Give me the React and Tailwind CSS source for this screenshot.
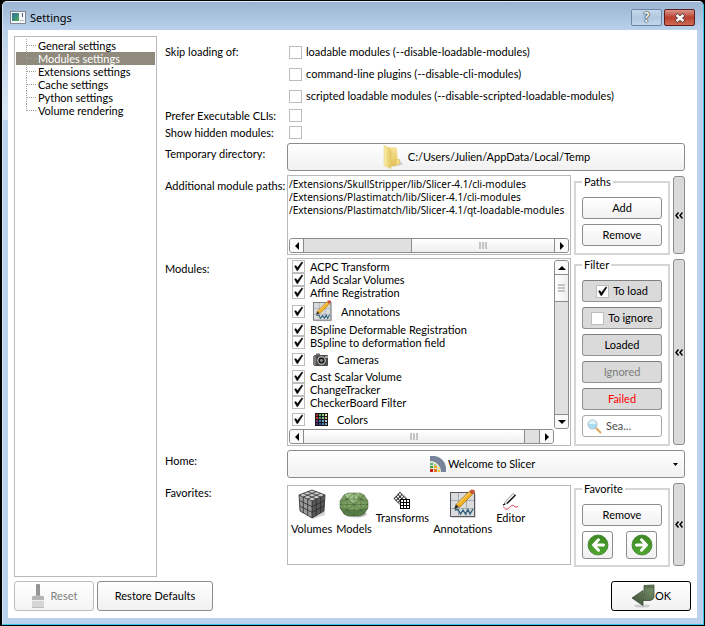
import { useState } from "react";

const BOX = "border border-[#b9b9b9] bg-white";
const BUTTON =
  "flex items-center justify-center rounded-[3px] border border-[#8c8c8c] bg-linear-to-b from-white to-[#f1f1f1]";
const TOGGLE =
  "flex h-[22px] w-full items-center justify-center rounded-[3px] border border-[#929292] border-t-[#7f7f7f] bg-[#dadada]";

const PAGES = [
  "General settings",
  "Modules settings",
  "Extensions settings",
  "Cache settings",
  "Python settings",
  "Volume rendering",
];

const SKIPS = [
  "loadable modules (--disable-loadable-modules)",
  "command-line plugins (--disable-cli-modules)",
  "scripted loadable modules (--disable-scripted-loadable-modules)",
];

const PATHS = [
  "/Extensions/SkullStripper/lib/Slicer-4.1/cli-modules",
  "/Extensions/Plastimatch/lib/Slicer-4.1/cli-modules",
  "/Extensions/Plastimatch/lib/Slicer-4.1/qt-loadable-modules",
];

const MODULES = [
  { name: "ACPC Transform" },
  { name: "Add Scalar Volumes" },
  { name: "Affine Registration" },
  { name: "Annotations", icon: "annotations" },
  { name: "BSpline Deformable Registration" },
  { name: "BSpline to deformation field" },
  { name: "Cameras", icon: "camera" },
  { name: "Cast Scalar Volume" },
  { name: "ChangeTracker" },
  { name: "CheckerBoard Filter" },
  { name: "Colors", icon: "colors" },
];

function CheckBox({ id, defaultChecked = false, label }) {
  return (
    <span className="relative block size-[13px] shrink-0">
      <input
        id={id}
        type="checkbox"
        aria-label={label}
        defaultChecked={defaultChecked}
        className="peer block size-[13px] appearance-none border border-[#bdbdbd] bg-white"
      />
      <svg
        viewBox="0 0 13 13"
        className="pointer-events-none absolute inset-0 hidden size-[13px] peer-checked:block"
      >
        <path d="M2.6 6.2 L4 5.6 L5.3 7.8 L10 1.8 L10.8 2.6 L5.7 10.6 L4.9 10.6 Z" fill="#000" stroke="#000" strokeWidth="0.5" />
      </svg>
    </span>
  );
}

function AppIcon() {
  return (
    <svg viewBox="0 0 16 13" className="h-[13px] w-4 shrink-0">
      <defs>
        <linearGradient id="appGreen" x1="0" y1="0" x2="1" y2="1">
          <stop offset="0" stopColor="#2e6aa0" />
          <stop offset="1" stopColor="#4cae5c" />
        </linearGradient>
      </defs>
      <rect x="0.5" y="0.5" width="15" height="12" fill="#f7f7f7" stroke="#7d8894" />
      <rect x="2" y="2" width="7" height="8" fill="url(#appGreen)" />
      <rect x="12" y="2" width="1" height="4" fill="#3d5f8a" />
      <rect x="10" y="9" width="4" height="1" fill="#b9bcc0" />
    </svg>
  );
}

function FolderIcon() {
  return (
    <svg viewBox="0 0 22 24" className="h-6 w-[22px] shrink-0">
      <defs>
        <linearGradient id="folderFront" x1="0" y1="0" x2="1" y2="0">
          <stop offset="0" stopColor="#fbeeb0" />
          <stop offset="1" stopColor="#e6c65c" />
        </linearGradient>
        <linearGradient id="folderBack" x1="0" y1="0" x2="0" y2="1">
          <stop offset="0" stopColor="#f6e39a" />
          <stop offset="1" stopColor="#e3bf52" />
        </linearGradient>
      </defs>
      <path d="M10 22 L21 19.5 L17 14 Z" fill="#a8a8a8" opacity="0.5" />
      <path d="M5 2 L14 2.5 L15 4 L15.5 15 L15.5 20 L7 22 Z" fill="url(#folderBack)" />
      <path d="M2 0.5 L7 3 L9 6 L9 23.5 L2 20.5 Z" fill="url(#folderFront)" stroke="#e3c868" strokeWidth="0.5" />
      <path d="M14 14.5 H17.5 V19 L14 20 Z" fill="#f2dc84" stroke="#dfbe5a" strokeWidth="0.5" />
    </svg>
  );
}

function AnnotationsIcon({ className }) {
  return (
    <svg viewBox="0 0 28 30" className={className}>
      <rect x="3" y="5" width="24" height="24" fill="#8e9096" opacity="0.35" />
      <rect x="1.5" y="3.5" width="24" height="24" fill="#d9dbdc" stroke="#55585c" strokeWidth="1" />
      <path d="M9.5 4 V27 M17.5 4 V27 M2 11.5 H25 M2 19.5 H25" stroke="#a9acaf" strokeWidth="1" />
      <path d="M6 21 L9 20.5 L11.5 25 L14 21 L16.5 25 L19 20.5 L21 25 L24 20" fill="none" stroke="#2f607d" strokeWidth="1.4" />
      <path d="M5 20.5 L7 15 L10.5 17.5 Z" fill="#2a2a2a" />
      <path d="M7 15.5 L20 2.5 L23.5 5.5 L10.5 18.5 Z" fill="#efaf20" stroke="#9a6a10" strokeWidth="0.6" />
      <path d="M8.5 15.5 L21 3.5" stroke="#ffe08a" strokeWidth="1" />
      <path d="M20 2.5 L22.5 0.5 L25.5 1 L25.8 3.5 L23.5 5.5 Z" fill="#c8553b" />
    </svg>
  );
}

function CameraIcon() {
  return (
    <svg viewBox="0 0 16 14" className="h-[14px] w-4 shrink-0">
      <rect x="1" y="2" width="14" height="11" rx="1" fill="#4a4c4c" />
      <rect x="3" y="0.5" width="4" height="2" fill="#6c6e6e" />
      <rect x="0" y="3" width="3" height="9" fill="#7a7c7c" />
      <rect x="12" y="3" width="3" height="2" fill="#a7a9a9" />
      <circle cx="8.5" cy="7.5" r="4.2" fill="#d4d6d6" />
      <circle cx="8.5" cy="7.5" r="3.2" fill="#1c1c1c" />
      <circle cx="8.5" cy="7.5" r="1.4" fill="#8f9494" />
    </svg>
  );
}

const SWATCHES = [
  ["#b02a3a", "#5fae62", "#8fd07a", "#e8e6b0"],
  ["#d8342c", "#4f9a86", "#7fc4b0", "#d8b070"],
  ["#7a2c8c", "#3f6fa8", "#6fa4cc", "#b8c8d8"],
  ["#4a2a6c", "#2c4c9c", "#4c84c4", "#8098c0"],
];

function ColorsIcon() {
  return (
    <svg viewBox="0 0 13 13" className="size-[13px] shrink-0">
      <rect width="13" height="13" fill="#1b1b1b" />
      {SWATCHES.flatMap((row, y) =>
        row.map((fill, x) => (
          <rect key={`${x}${y}`} x={1 + x * 3} y={1 + y * 3} width="2" height="2" fill={fill} />
        ))
      )}
    </svg>
  );
}

function SlicerIcon() {
  return (
    <svg viewBox="0 0 16 16" className="size-4 shrink-0">
      <path d="M0 5 A11 11 0 0 1 11 16 H0 Z" fill="#e3e6cf" />
      <path d="M0 0 H5 A13 13 0 0 1 16 11 V16 H11 A11 11 0 0 0 0 5 Z" fill="#76839b" />
      <rect x="0" y="7" width="3" height="2" fill="#5fae8c" />
      <rect x="4" y="8" width="2" height="2" fill="#a9d07c" />
      <rect x="0" y="10" width="3" height="2" fill="#3f9c3c" />
      <rect x="4" y="10" width="3" height="2" fill="#f0a030" />
      <rect x="8" y="11" width="2" height="2" fill="#f0e080" />
      <rect x="0" y="13" width="3" height="3" fill="#c81e18" />
      <rect x="4" y="13" width="3" height="3" fill="#e87020" />
      <rect x="8" y="14" width="2" height="2" fill="#f0c040" />
    </svg>
  );
}

function VolumesIcon() {
  return (
    <svg viewBox="0 0 28 30" className="h-[30px] w-7">
      <path d="M14 29 L27 22 V26 L15 30 Z" fill="#aaa" opacity="0.5" />
      <path d="M14 1 L27 6 L14 12 L1 6 Z" fill="#c9c9c9" />
      <path d="M1 6 L14 12 V29 L2 22 Z" fill="#9a9a9a" />
      <path d="M27 6 L14 12 V29 L26 22 Z" fill="#585858" />
      <path
        d="M14 1 L27 6 L14 12 L1 6 Z M1 6 L2 22 L14 29 L26 22 L27 6 M14 12 V29 M9.7 2.7 L22.7 8 M5.3 4.3 L18.3 10 M18.3 2.7 L5.3 8 M22.7 4.3 L9.7 10 M1.3 11.5 L14 17.7 L26.7 11.5 M1.7 17 L14 23.3 L26.3 17 M5.3 8 V24 M9.7 10 V26.5 M18.3 10 V26.5 M22.7 8 V24"
        fill="none"
        stroke="#2b2b2b"
        strokeWidth="0.8"
      />
    </svg>
  );
}

function ModelsIcon() {
  return (
    <svg viewBox="0 0 30 26" className="h-[26px] w-[30px]">
      <ellipse cx="17" cy="22" rx="11" ry="3.5" fill="#888" opacity="0.5" />
      <path d="M9 1 H21 L25 3 L29 9 V16 L25 22 L21 24 H9 L5 22 L1 16 V9 L5 3 Z" fill="#7da163" />
      <path d="M5 3 L9 1 H21 L15 12 L5 3 Z" fill="#a3c38a" />
      <path d="M1 16 L5 22 L9 24 H21 L25 22 L29 16 L22 18 H8 Z" fill="#5a7f48" />
      <path
        d="M9 1 H21 L25 3 L29 9 V16 L25 22 L21 24 H9 L5 22 L1 16 V9 L5 3 Z M5 3 L8 7 L1 9 M8 7 H22 L29 9 M25 3 L22 7 M8 7 V18 L1 16 M22 7 V18 L29 16 M8 18 H22 M8 18 L5 22 M22 18 L25 22 M8 7 L22 18 M22 7 L8 18 M15 1 V24 M1 12.5 H29 M8 7 L15 1 L22 7 M8 18 L15 24 L22 18 M1 12.5 L8 7 M1 12.5 L8 18 M29 12.5 L22 7 M29 12.5 L22 18"
        fill="none"
        stroke="#3c5a30"
        strokeWidth="0.5"
      />
    </svg>
  );
}

function TransformsIcon() {
  return (
    <svg viewBox="0 0 18 18" className="size-[18px]">
      <path
        d="M7 0.5 L14 7 M5 2.5 L11 8.5 M3 4.5 L9 10.5 M1 6.5 L8 13 M7 0.5 L1 6.5 M9 2.5 L3 8.5 M11 4.5 L5 10.5 M13 6.5 L7 12.5"
        fill="none"
        stroke="#111"
        strokeWidth="1.2"
        strokeDasharray="1 0.6"
      />
      <rect x="7" y="7" width="10" height="10" fill="#fff" />
      <path d="M7.5 7 V17 M10.5 7 V17 M13.5 7 V17 M16.5 7 V17 M7 7.5 H17 M7 10.5 H17 M7 13.5 H17 M7 16.5 H17" stroke="#000" strokeWidth="1" />
    </svg>
  );
}

function EditorIcon() {
  return (
    <svg viewBox="0 0 18 18" className="size-[18px]">
      <path d="M2 12.5 L3 10 L11 1.5 L13.5 3 L5 11.5 Z" fill="#f2f2f2" stroke="#777" strokeWidth="0.7" />
      <path d="M5 11.5 L13.5 3" stroke="#111" strokeWidth="1.3" />
      <path d="M1 13 L3 12" stroke="#000" strokeWidth="1.2" />
      <path d="M1.5 14.5 C3 18 5 17.5 7 16 C9 14 10 12.5 12 14 C13.5 15 14 15.5 16 14.5" fill="none" stroke="#d8344c" strokeWidth="1" />
    </svg>
  );
}

function ArrowBall({ flip }) {
  return (
    <svg viewBox="0 0 22 22" className="size-[22px]">
      <defs>
        <linearGradient id={flip ? "ballR" : "ballL"} x1="0" y1="0" x2="0" y2="1">
          <stop offset="0" stopColor="#3c8a24" />
          <stop offset="1" stopColor="#4fa62e" />
        </linearGradient>
      </defs>
      <circle cx="11" cy="11" r="10" fill={`url(#${flip ? "ballR" : "ballL"})`} stroke="#3c7c2c" strokeWidth="0.8" />
      <path
        d={
          flip
            ? "M5.5 11 H14 M10.5 5.8 L15.5 11 L10.5 16.2"
            : "M16.5 11 H8 M11.5 5.8 L6.5 11 L11.5 16.2"
        }
        fill="none"
        stroke="#fff"
        strokeWidth="3"
        strokeLinecap="round"
        strokeLinejoin="round"
      />
    </svg>
  );
}

function BrushIcon() {
  return (
    <svg viewBox="0 0 14 26" className="h-[26px] w-[14px] shrink-0">
      <rect x="5" y="1" width="4" height="12" rx="1" fill="#949494" />
      <path d="M1 14 Q1.5 12.5 5 12.5 H9 Q12.5 12.5 13 14 V17 H1 Z" fill="#b4b4b4" />
      <path d="M1 17 H13 V24 H1 Z" fill="#d6d6d6" />
      <path d="M1 17.5 H13" stroke="#eee" strokeWidth="1" />
      <path d="M1 24.5 H13" stroke="#bbb" strokeWidth="1" />
    </svg>
  );
}

function ReturnIcon() {
  return (
    <svg viewBox="0 0 24 24" className="size-6 shrink-0">
      <defs>
        <linearGradient id="returnFill" x1="1" y1="0" x2="0" y2="1">
          <stop offset="0" stopColor="#7d956e" />
          <stop offset="1" stopColor="#3a4d35" />
        </linearGradient>
      </defs>
      <ellipse cx="11" cy="22" rx="8" ry="1.6" fill="#bbb" opacity="0.7" />
      <path d="M13 1.5 L23 1 V13 Q22.5 16 19 16.5 H12 V21.5 L1 14 L12 6.5 V10.5 H13 Z" fill="url(#returnFill)" stroke="#3b4a36" strokeWidth="0.8" />
      <path d="M14 2 L22 1.6 V4 L14 4.5 Z" fill="#5d7050" />
    </svg>
  );
}

function SearchIcon() {
  return (
    <svg viewBox="0 0 15 15" className="size-[15px] shrink-0">
      <path d="M9 9 L13.5 13.5" stroke="#e0a85c" strokeWidth="2" strokeLinecap="round" />
      <circle cx="5.5" cy="5.5" r="4.6" fill="#a9dcf0" stroke="#b4c4cc" strokeWidth="1" />
      <path d="M2 5 A3.5 3.5 0 0 1 9 5 Z" fill="#dff4fb" />
    </svg>
  );
}

const TRIANGLES = {
  left: "M6 0 V8 L2 4 Z",
  right: "M2 0 V8 L6 4 Z",
  up: "M0 6 H8 L4 2 Z",
  down: "M0 2 H8 L4 6 Z",
};

function Arrow({ dir }) {
  return (
    <svg viewBox="0 0 8 8" className="size-2">
      <path d={TRIANGLES[dir]} fill="#000" />
    </svg>
  );
}

function HScroll({ before, thumb, after }) {
  return (
    <div className="flex h-[15px] overflow-hidden rounded-[3px] border border-[#8c8c8c] bg-[#e0e0e0]">
      <button aria-label="Scroll left" className="flex w-3.5 items-center justify-center border-r border-[#8c8c8c] bg-[#fafafa]">
        <Arrow dir="left" />
      </button>
      <div className={before} />
      <div className={`flex items-center justify-center gap-px bg-linear-to-b from-white to-[#efefef] ${thumb}`}>
        <i className="h-[7px] w-0.5 bg-[#c4c4c4]" />
        <i className="h-[7px] w-0.5 bg-[#c4c4c4]" />
        <i className="h-[7px] w-0.5 bg-[#c4c4c4]" />
      </div>
      <div className={after} />
      <button aria-label="Scroll right" className="flex w-3.5 items-center justify-center border-l border-[#8c8c8c] bg-[#fafafa]">
        <Arrow dir="right" />
      </button>
    </div>
  );
}

function VScroll() {
  return (
    <div className="flex w-[15px] flex-col overflow-hidden rounded-[3px] border border-[#8c8c8c] bg-[#e0e0e0]">
      <button aria-label="Scroll up" className="flex h-3.5 items-center justify-center border-b border-[#8c8c8c] bg-[#fafafa]">
        <Arrow dir="up" />
      </button>
      <div className="flex h-[27px] flex-col items-center justify-center gap-px border-b border-[#8c8c8c] bg-linear-to-r from-white to-[#efefef]">
        <i className="h-0.5 w-[7px] bg-[#c4c4c4]" />
        <i className="h-0.5 w-[7px] bg-[#c4c4c4]" />
        <i className="h-0.5 w-[7px] bg-[#c4c4c4]" />
      </div>
      <div className="flex-1" />
      <button aria-label="Scroll down" className="flex h-3.5 items-center justify-center border-t border-[#8c8c8c] bg-[#fafafa]">
        <Arrow dir="down" />
      </button>
    </div>
  );
}

function Row({ label, htmlFor, className = "", labelClass = "pt-[3px]", children }) {
  const Tag = htmlFor ? "label" : "span";
  return (
    <div className={`flex ${className}`}>
      <Tag htmlFor={htmlFor} className={`w-[122px] shrink-0 whitespace-nowrap ${labelClass}`}>
        {label}
      </Tag>
      {children}
    </div>
  );
}

function Group({ title, children }) {
  return (
    <fieldset className="ml-[3px] w-24 shrink-0 border-2 border-[#d6d6d6] px-1.5 pt-[9px] pb-1.5">
      <legend className="px-0.5 leading-[13px]">{title}</legend>
      {children}
    </fieldset>
  );
}

function Collapse() {
  return (
    <button
      aria-label="Collapse"
      className="my-px ml-[3px] flex w-3 shrink-0 items-center justify-center rounded-[3px] border border-[#8c8c8c] bg-[#dadada]"
    >
      <svg viewBox="0 0 8 7" className="h-[7px] w-2">
        <path d="M3.5 0.5 L1 3.5 L3.5 6.5 M7.5 0.5 L5 3.5 L7.5 6.5" fill="none" stroke="#000" strokeWidth="1.5" />
      </svg>
    </button>
  );
}

function ModuleItem({ name, icon }) {
  const id = `module-${name.replace(/ /g, "-")}`;
  const height = icon === "annotations" ? "h-6" : icon ? "h-[21px]" : "h-[13px]";
  return (
    <li className={`flex shrink-0 items-center ${height}`}>
      <CheckBox id={id} defaultChecked />
      {icon === "annotations" && <AnnotationsIcon className="ml-[7px] h-[22px] w-[21px] shrink-0" />}
      {icon === "camera" && (
        <span className="ml-2 flex w-4 justify-center">
          <CameraIcon />
        </span>
      )}
      {icon === "colors" && (
        <span className="ml-2 flex w-4 justify-center">
          <ColorsIcon />
        </span>
      )}
      <label htmlFor={id} className={`leading-[13px] ${icon ? "ml-2" : "ml-[5px]"}`}>
        {name}
      </label>
    </li>
  );
}

function Favorite({ label, children }) {
  return (
    <li className="flex flex-col items-center leading-[16px]">
      {children}
      <span>{label}</span>
    </li>
  );
}

export default function App() {
  const [page, setPage] = useState("Modules settings");

  return (
    <div className="flex min-h-screen flex-col bg-black pt-px pr-px pb-px pl-0.5 font-[Lato,'Liberation_Sans',sans-serif] text-[11px] leading-[16px] text-black">
      <div className="flex flex-1 flex-col rounded-t-[5px] border border-t-[#e4eef8] border-r-[#35c8e6] border-b-[#35c8e6] border-l-[#d6e4f3] bg-[#b9d1ea] bg-[linear-gradient(to_bottom,#b0c8e2,#dbe7f5)] bg-[size:5px_118px] bg-no-repeat pr-1.5 pb-[6px] pl-[5px]">
        <header className="-mr-1.5 -ml-[5px] flex h-7 items-center rounded-t bg-linear-to-b from-[#9ab4d2] to-[#b9d1ea] pt-[3px] pr-2 pl-[7px]">
          <AppIcon />
          <h1 className="ml-1 flex-1 font-['Noto_Sans','Open_Sans',sans-serif] leading-[18px]">Settings</h1>
          <button
            aria-label="Help"
            className="flex h-[17px] w-[31px] items-center justify-center rounded-[2px] border border-[#6c86a3] bg-linear-to-b from-[#c6d9ed] via-[#b0c8e0] to-[#c0d6ec]"
          >
            <span className="text-[13px] leading-[15px] font-bold text-white [text-shadow:0_0_1px_#333,0_0_1px_#333,0_0_2px_#333]">?</span>
          </button>
          <button
            aria-label="Close"
            className="ml-0.5 flex h-[17px] w-[31px] items-center justify-center rounded-[2px] border border-[#5f1d1a] bg-linear-to-b from-[#d9948a] via-[#b93f2f] to-[#cf6a55]"
          >
            <svg viewBox="0 0 12 10" className="h-2.5 w-3">
              <path d="M2 1.5 L10 8.5 M10 1.5 L2 8.5" stroke="#5b3a3a" strokeWidth="4" />
              <path d="M2.5 2 L9.5 8 M9.5 2 L2.5 8" stroke="#fff" strokeWidth="2.4" />
            </svg>
          </button>
        </header>

        <div className="flex flex-1 flex-col bg-white px-1.5 pt-1.5 pb-[7px]">
          <div className="flex flex-1">
            <nav className={`w-[143px] shrink-0 px-px pt-0.5 ${BOX}`}>
              <ul>
                {PAGES.map((name, i) => (
                  <li key={name} className={`flex h-[13px] ${page === name ? "bg-[#8f8a7c]" : ""}`}>
                    <span
                      className={`ml-2.5 w-px border-l border-dotted border-[#a0a0a0] ${i === PAGES.length - 1 ? "h-[7px]" : ""}`}
                    />
                    <span className="h-[7px] w-[9px] border-b border-dotted border-[#a0a0a0]" />
                    <button
                      onClick={() => setPage(name)}
                      className={`ml-0.5 leading-[13px] whitespace-nowrap ${page === name ? "text-white" : ""}`}
                    >
                      {name}
                    </button>
                  </li>
                ))}
              </ul>
            </nav>

            <main className="flex min-w-0 flex-1 flex-col pt-[5px] pr-1.5 pl-2">
              <Row label="Skip loading of:">
                <div className="flex flex-col">
                  {SKIPS.map((text, i) => (
                    <div key={text} className="flex h-[22px] items-center pl-0.5">
                      <CheckBox id={`skip-${i}`} />
                      <label htmlFor={`skip-${i}`} className="ml-1 whitespace-nowrap">
                        {text}
                      </label>
                    </div>
                  ))}
                </div>
              </Row>
              <Row label="Prefer Executable CLIs:" htmlFor="prefer" className="h-[17px] items-center" labelClass="">
                <span className="pl-0.5">
                  <CheckBox id="prefer" />
                </span>
              </Row>
              <Row label="Show hidden modules:" htmlFor="hidden" className="h-[17px] items-center" labelClass="">
                <span className="pl-0.5">
                  <CheckBox id="hidden" />
                </span>
              </Row>

              <Row label="Temporary directory:" htmlFor="tempdir" className="mt-0.5">
                <button id="tempdir" className={`h-7 flex-1 ${BUTTON}`}>
                  <FolderIcon />
                  <span className="ml-1">C:/Users/Julien/AppData/Local/Temp</span>
                </button>
              </Row>

              <Row label="Additional module paths:" className="mt-1">
                <div className={`flex h-20 min-w-0 flex-1 flex-col px-px pt-0.5 pb-px ${BOX}`}>
                  <ul className="flex-1 overflow-hidden font-['Noto_Sans','Open_Sans',sans-serif] text-[10px]">
                    {PATHS.map((path) => (
                      <li key={path} className="leading-[13px] whitespace-nowrap">
                        {path}
                      </li>
                    ))}
                  </ul>
                  <HScroll before="flex-3" thumb="flex-4 border-l border-[#8c8c8c]" after="" />
                </div>
                <Group title="Paths">
                  <div className="flex flex-col gap-[5px]">
                    <button className={`h-[22px] w-full ${BUTTON}`}>Add</button>
                    <button className={`h-[22px] w-full ${BUTTON}`}>Remove</button>
                  </div>
                </Group>
                <Collapse />
              </Row>

              <Row label="Modules:" className="mt-[3px]">
                <div className={`flex h-[188px] min-w-0 flex-1 flex-col px-px pt-px pb-px ${BOX}`}>
                  <div className="flex min-h-0 flex-1">
                    <ul className="flex min-w-0 flex-1 flex-col overflow-hidden pl-[3px]">
                      {MODULES.map((m) => (
                        <ModuleItem key={m.name} {...m} />
                      ))}
                    </ul>
                    <VScroll />
                  </div>
                  <div className="pr-[15px]">
                    <HScroll before="" thumb="flex-1 border-r border-[#8c8c8c]" after="w-3.5" />
                  </div>
                </div>
                <Group title="Filter">
                  <div className="flex flex-col gap-[5px]">
                    <label htmlFor="to-load" className={TOGGLE}>
                      <CheckBox id="to-load" defaultChecked />
                      <span className="ml-1">To load</span>
                    </label>
                    <label htmlFor="to-ignore" className={TOGGLE}>
                      <CheckBox id="to-ignore" />
                      <span className="ml-1">To ignore</span>
                    </label>
                    <button className={TOGGLE}>Loaded</button>
                    <button className={`text-[#7c7c7c] ${TOGGLE}`}>Ignored</button>
                    <button className={`text-[#ff0000] ${TOGGLE}`}>Failed</button>
                    <div className="flex h-[22px] items-center rounded-[3px] border border-[#a8a8a8] bg-white pl-1">
                      <SearchIcon />
                      <input
                        type="text"
                        aria-label="Search modules"
                        placeholder="Sea..."
                        className="ml-1 w-full min-w-0 placeholder:text-[#4c4c4c] placeholder:opacity-100"
                      />
                    </div>
                  </div>
                </Group>
                <Collapse />
              </Row>

              <Row label="Home:" htmlFor="home" className="mt-1">
                <div className={`h-7 flex-1 ${BUTTON}`}>
                  <span className="flex-1" />
                  <SlicerIcon />
                  <select id="home" className="ml-0.5 appearance-none">
                    <option>Welcome to Slicer</option>
                  </select>
                  <span className="flex flex-1 justify-end pr-1.5">
                    <svg viewBox="0 0 5 3" className="h-[3px] w-[5px]">
                      <path d="M0 0 H5 L2.5 3 Z" fill="#000" />
                    </svg>
                  </span>
                </div>
              </Row>

              <Row label="Favorites:" className="mt-1">
                <div className={`mt-[3px] flex h-20 min-w-0 flex-1 ${BOX}`}>
                  <ul className="flex items-start gap-1 pt-[3px] pl-[3px]">
                    <Favorite label="Volumes">
                      <span className="flex h-8 items-start">
                        <VolumesIcon />
                      </span>
                    </Favorite>
                    <Favorite label="Models">
                      <span className="flex h-8 items-center">
                        <ModelsIcon />
                      </span>
                    </Favorite>
                    <Favorite label="Transforms">
                      <span className="flex h-[21px] items-end">
                        <TransformsIcon />
                      </span>
                    </Favorite>
                    <Favorite label="Annotations">
                      <span className="flex h-8 items-start">
                        <AnnotationsIcon className="h-[30px] w-7" />
                      </span>
                    </Favorite>
                    <Favorite label="Editor">
                      <span className="flex h-[21px] items-end">
                        <EditorIcon />
                      </span>
                    </Favorite>
                  </ul>
                </div>
                <Group title="Favorite">
                  <button className={`h-[22px] w-full ${BUTTON}`}>Remove</button>
                  <div className="mt-[5px] flex gap-[13px]">
                    <button aria-label="Move left" className={`h-7 w-[31px] ${BUTTON}`}>
                      <ArrowBall />
                    </button>
                    <button aria-label="Move right" className={`h-7 w-[31px] ${BUTTON}`}>
                      <ArrowBall flip />
                    </button>
                  </div>
                </Group>
                <Collapse />
              </Row>
            </main>
          </div>

          <footer className="mt-1 flex">
            <button
              disabled
              className="flex h-[30px] w-20 items-center justify-center rounded-[3px] border border-[#bdbdbd] bg-linear-to-b from-white to-[#f4f4f4] text-[#808080]"
            >
              <BrushIcon />
              <span className="ml-1.5">Reset</span>
            </button>
            <button className={`ml-[3px] h-[30px] w-[116px] ${BUTTON}`}>Restore Defaults</button>
            <button className="ml-auto flex h-[30px] w-20 items-center justify-center rounded-[3px] border border-black bg-linear-to-b from-white to-[#f1f1f1]">
              <ReturnIcon />
              <span>OK</span>
            </button>
          </footer>
        </div>
      </div>
    </div>
  );
}
